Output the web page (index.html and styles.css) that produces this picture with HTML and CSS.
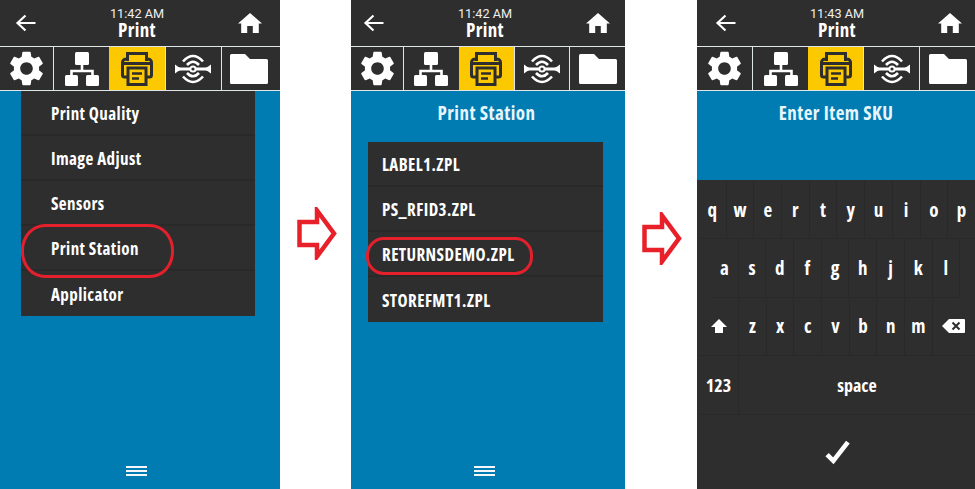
FILE: index.html
```html
<!DOCTYPE html>
<html lang="en">
<head>
  <meta charset="UTF-8" />
  <title>Print Station steps</title>
  <link rel="stylesheet" href="styles.css">
</head>
<body>

  <!-- shared icons -->
  <svg class="defs" width="0" height="0">
    <symbol id="i-back" viewBox="0 0 20 18">
      <path d="M10 1.500 2 9l8 7.500M2.500 9H20" fill="none" stroke="#fff" stroke-width="2.200"/>
    </symbol>
    <symbol id="i-home" viewBox="0 0 24 20">
      <path d="M12 0 24 10.500h-3.200V20h-6v-7H9.200v7h-6v-9.500H0z" fill="#fff"/>
    </symbol>
    <symbol id="i-gear" viewBox="2.400 2 19.200 20">
      <path fill="#fff" fill-rule="evenodd" d="M19.140 12.940c.04-.3.06-.61.06-.94 0-.32-.02-.64-.07-.94l2.030-1.580c.18-.14.23-.41.12-.61l-1.920-3.320c-.12-.22-.37-.29-.59-.22l-2.390.96c-.5-.38-1.030-.7-1.620-.94l-.36-2.540c-.04-.24-.24-.41-.48-.41h-3.840c-.24 0-.43.17-.47.41l-.36 2.540c-.59.24-1.130.57-1.620.94l-2.390-.96c-.22-.08-.47 0-.59.22L2.740 8.870c-.12.21-.08.47.12.61l2.030 1.580c-.05.3-.09.63-.09.94s.02.64.07.94l-2.030 1.580c-.18.14-.23.41-.12.61l1.920 3.320c.12.22.37.29.59.22l2.390-.96c.5.38 1.030.7 1.620.94l.36 2.540c.05.24.24.41.48.41h3.840c.24 0 .44-.17.47-.41l.36-2.540c.59-.24 1.130-.56 1.620-.94l2.390.96c.22.08.47 0 .59-.22l1.920-3.320c.12-.22.07-.47-.12-.61l-2.010-1.580zM12 15.600c-1.980 0-3.600-1.620-3.600-3.600s1.620-3.600 3.600-3.600 3.600 1.620 3.600 3.600-1.620 3.600-3.600 3.600z"/>
    </symbol>
    <symbol id="i-network" viewBox="0 0 34 34">
      <rect x="10" y="0" width="14" height="13" rx="1.500" fill="#fff"/>
      <rect x="0" y="23" width="13" height="11" rx="1.500" fill="#fff"/>
      <rect x="21" y="23" width="13" height="11" rx="1.500" fill="#fff"/>
      <path d="M17 12v7M6.500 24v-5h21v5" fill="none" stroke="#fff" stroke-width="2.600"/>
    </symbol>
    <symbol id="i-printer" viewBox="0 0 32 34">
      <path d="M6.500 9V1.500h19V9M6.500 7H5a3.500 3.500 0 0 0-3.500 3.500V23a2 2 0 0 0 2 2h3M25.500 7H27a3.500 3.500 0 0 1 3.500 3.500V23a2 2 0 0 1-2 2h-3" fill="none" stroke="#2e2e2e" stroke-width="3"/>
      <path d="M1.500 11.500h29" stroke="#2e2e2e" stroke-width="3"/>
      <rect x="7" y="16" width="18" height="16.500" fill="none" stroke="#2e2e2e" stroke-width="3"/>
      <path d="M11 21.500h10M11 26.500h7" stroke="#2e2e2e" stroke-width="2.400"/>
    </symbol>
    <symbol id="i-rfid" viewBox="0 0 36 34">
      <path d="M0 12.500c2 1.500 3 3 7 3h22c4 0 5-1.500 7-3v9c-2-1.500-3-3-7-3H7c-4 0-5 1.500-7 3z" fill="#fff"/>
      <circle cx="18" cy="17" r="3.600" fill="#fff"/>
      <circle cx="18" cy="17" r="1.600" fill="#2e2e2e"/>
      <path d="M8 9.500Q18-1.500 28 9.500M12 13Q18 6.500 24 13M8 24.500Q18 35.500 28 24.500M12 21Q18 27.500 24 21" fill="none" stroke="#fff" stroke-width="2.600"/>
    </symbol>
    <symbol id="i-folder" viewBox="0 0 38 30">
      <path d="M1.500 0H15l5 5h16.500A1.500 1.500 0 0 1 38 6.500v22a1.500 1.500 0 0 1-1.500 1.500h-35A1.500 1.500 0 0 1 0 28.500v-27A1.500 1.500 0 0 1 1.500 0z" fill="#fff"/>
    </symbol>
    <symbol id="i-arrow" viewBox="0 0 40 53">
      <path d="M2.500 15h17.500V3.500L37 26.500 20 49.500V38H2.500z" fill="#fff" stroke="#e8202a" stroke-width="4.500"/>
    </symbol>
  </svg>

  <div class="page">

    <div class="screen screen-a">
      <header class="top">
        <svg class="ic-back"><use href="#i-back"/></svg>
        <div class="clock"><span>11:42 AM</span><b>Print</b></div>
        <svg class="ic-home"><use href="#i-home"/></svg>
      </header>
      <nav class="tabs">
        <div class="tab"><svg class="ic-gear"><use href="#i-gear"/></svg></div>
        <div class="tab"><svg class="ic-network"><use href="#i-network"/></svg></div>
        <div class="tab active"><svg class="ic-printer"><use href="#i-printer"/></svg></div>
        <div class="tab"><svg class="ic-rfid"><use href="#i-rfid"/></svg></div>
        <div class="tab"><svg class="ic-folder"><use href="#i-folder"/></svg></div>
      </nav>
      <main class="body">
        <div class="menu">
          <div class="row">Print Quality</div>
          <div class="row">Image Adjust</div>
          <div class="row">Sensors</div>
          <div class="row">Print Station<i class="oval oval-a"></i></div>
          <div class="row">Applicator</div>
        </div>
        <div class="burger"><i></i><i></i><i></i></div>
      </main>
    </div>

    <div class="gap gap-a"><svg class="ic-arrow"><use href="#i-arrow"/></svg></div>

    <div class="screen screen-b">
      <header class="top">
        <svg class="ic-back"><use href="#i-back"/></svg>
        <div class="clock"><span>11:42 AM</span><b>Print</b></div>
        <svg class="ic-home"><use href="#i-home"/></svg>
      </header>
      <nav class="tabs">
        <div class="tab"><svg class="ic-gear"><use href="#i-gear"/></svg></div>
        <div class="tab"><svg class="ic-network"><use href="#i-network"/></svg></div>
        <div class="tab active"><svg class="ic-printer"><use href="#i-printer"/></svg></div>
        <div class="tab"><svg class="ic-rfid"><use href="#i-rfid"/></svg></div>
        <div class="tab"><svg class="ic-folder"><use href="#i-folder"/></svg></div>
      </nav>
      <main class="body">
        <h2>Print Station</h2>
        <div class="menu files">
          <div class="row">LABEL1.ZPL</div>
          <div class="row">PS_RFID3.ZPL</div>
          <div class="row">RETURNSDEMO.ZPL<i class="oval oval-b"></i></div>
          <div class="row">STOREFMT1.ZPL</div>
        </div>
        <div class="burger"><i></i><i></i><i></i></div>
      </main>
    </div>

    <div class="gap gap-b"><svg class="ic-arrow"><use href="#i-arrow"/></svg></div>

    <div class="screen screen-c">
      <header class="top">
        <svg class="ic-back"><use href="#i-back"/></svg>
        <div class="clock"><span>11:43 AM</span><b>Print</b></div>
        <svg class="ic-home"><use href="#i-home"/></svg>
      </header>
      <nav class="tabs">
        <div class="tab"><svg class="ic-gear"><use href="#i-gear"/></svg></div>
        <div class="tab"><svg class="ic-network"><use href="#i-network"/></svg></div>
        <div class="tab active"><svg class="ic-printer"><use href="#i-printer"/></svg></div>
        <div class="tab"><svg class="ic-rfid"><use href="#i-rfid"/></svg></div>
        <div class="tab"><svg class="ic-folder"><use href="#i-folder"/></svg></div>
      </nav>
      <main class="body">
        <h2>Enter Item SKU</h2>
        <div class="keyboard">
          <div class="keys">
            <div class="key">q</div><div class="key">w</div><div class="key">e</div><div class="key">r</div><div class="key">t</div><div class="key">y</div><div class="key">u</div><div class="key">i</div><div class="key">o</div><div class="key">p</div>
          </div>
          <div class="keys keys-home">
            <div class="key">a</div><div class="key">s</div><div class="key">d</div><div class="key">f</div><div class="key">g</div><div class="key">h</div><div class="key">j</div><div class="key">k</div><div class="key">l</div>
          </div>
          <div class="keys">
            <div class="key key-wide">
              <svg class="ic-shift" viewBox="0 0 16 14"><path d="M8 0l8 8h-4v6H4V8H0z" fill="#fff"/></svg>
            </div>
            <div class="key">z</div><div class="key">x</div><div class="key">c</div><div class="key">v</div><div class="key">b</div><div class="key">n</div><div class="key">m</div>
            <div class="key key-del">
              <svg class="ic-del" viewBox="0 0 23 14"><path d="M7 0h15a1 1 0 0 1 1 1v12a1 1 0 0 1-1 1H7L0 7z" fill="#fff"/><path d="M10.500 3.500l7 7m0-7l-7 7" stroke="#2e2e2e" stroke-width="2"/></svg>
            </div>
          </div>
          <div class="keys">
            <div class="key key-wide key-num">123</div>
            <div class="key key-space">space</div>
          </div>
          <div class="done">
            <svg class="ic-check" viewBox="0 0 24 24"><path d="M2 14l6 6L22 2" fill="none" stroke="#fff" stroke-width="4.500"/></svg>
          </div>
        </div>
      </main>
    </div>

  </div>

</body>
</html>
```

FILE: styles.css
```css
* { margin: 0; padding: 0; box-sizing: border-box; }
html, body { height: 100%; overflow: hidden; }
body {
  background: #fff;
  font-family: "Open Sans", "Noto Sans", sans-serif;
  font-stretch: 87.5%;
  color: #fff;
}
.defs { position: absolute; }
svg { display: block; }

.page {
  display: flex;
  height: 489px;
}
.screen {
  display: flex;
  flex-direction: column;
  height: 489px;
  background: #2e2e2e;
}
.screen-a { width: 280px; }
.screen-b { width: 274px; }
.screen-c { width: 278px; }

/* arrows between the screens */
.gap { display: flex; justify-content: center; }
.gap-a { width: 71px; padding: 207px 0 0 2px; }
.gap-b { width: 72px; padding: 212px 0 0 2px; }
.ic-arrow { width: 40px; height: 53px; }

/* top bar */
.top {
  display: flex;
  justify-content: space-between;
  align-items: center;
  height: 46px;
  padding: 0 18px 0 15px;
}
.screen-b .top { padding: 0 15px 0 12px; }
.screen-c .top { padding: 0 13px 0 18px; }
.clock {
  display: flex;
  flex-direction: column;
  align-items: center;
  line-height: 14px;
}
.clock span { font-family: Roboto, sans-serif; font-stretch: 100%; font-size: 12.700px; color: #eee; }
.clock b { font-size: 19px; font-weight: 700; line-height: 18px; letter-spacing: 0.4px; }
.ic-back { width: 21px; height: 18px; }
.ic-home { width: 24px; height: 20px; }

/* icon tabs */
.tabs {
  display: flex;
  height: 45px;
  border-top: 1px solid #dfe6e8;
  border-bottom: 1px solid #dfe6e8;
}
.tab {
  flex: 1;
  display: flex;
  justify-content: center;
  align-items: center;
  border-left: 1px solid #dfe6e8;
}
.tab:first-child { border-left: none; flex: 0 0 53px; }
.screen-b .tab:first-child { flex-basis: 52px; }
.screen-c .tab:first-child { flex-basis: 55px; }
.screen-a .tab:last-child { padding-right: 3px; }
.tab.active { background: #fcc900; border-left: none; }
.ic-gear { width: 35px; height: 35px; }
.ic-network { width: 34px; height: 34px; }
.ic-printer { width: 32px; height: 34px; }
.ic-rfid { width: 36px; height: 34px; }
.ic-folder { width: 38px; height: 30px; }

/* blue content */
.body {
  position: relative;
  flex: 1;
  background: #007cb2;
}
.body h2 {
  text-align: center;
  font-size: 19px;
  font-weight: 700;
  letter-spacing: 0.45px;
  line-height: 23px;
  padding-top: 11px;
  color: #e8f6fb;
}
.screen-b h2 { padding-right: 3px; }
.menu {
  width: 234px;
  margin-left: 21px;
  background: #2e2e2e;
}
.files { width: 235px; margin: 17px 0 0 17px; }
.row {
  position: relative;
  display: flex;
  align-items: center;
  height: 45px;
  padding: 2px 0 0 30px;
  font-size: 17px;
  font-weight: 700;
  letter-spacing: 0.42px;
  border-bottom: 2px solid #292929;
}
.row:last-child { border-bottom: none; }
.files .row { padding-left: 14px; }

/* red marker rings */
.oval {
  position: absolute;
  border: 3.500px solid #e3202c;
}
.oval-a { left: 0; top: -2px; width: 153px; height: 54px; border-radius: 24px / 26px; }
.oval-b { left: -2px; top: 5px; width: 167px; height: 38px; border-radius: 18px; }

.burger {
  position: absolute;
  left: 0;
  right: 7px;
  bottom: 13px;
  display: flex;
  flex-direction: column;
  align-items: center;
  gap: 2px;
}
.burger i { width: 21px; height: 2px; background: #f4f7f8; }

/* on-screen keyboard */
.keyboard {
  position: absolute;
  left: 0;
  right: 0;
  bottom: 0;
  top: 89px;
  background: #2e2e2e;
  padding: 1px 0 0 2px;
}
.keys { display: flex; height: 58.400px; }
.keys-home { padding-left: 12px; }
.key {
  flex: 0 0 27.700px;
  display: flex;
  justify-content: center;
  align-items: center;
  font-size: 19px;
  font-weight: 700;
  border-right: 1px solid #292929;
  border-bottom: 1px solid #292929;
}
.key-wide { flex-basis: 40px; }
.key-del { flex: 1; border-right: none; }
.key-space { flex: 1; border-right: none; font-size: 18px; }
.key-num { font-size: 18px; }
.ic-shift { width: 16px; height: 14px; }
.ic-del { width: 23px; height: 14px; }
.done {
  display: flex;
  justify-content: center;
  align-items: center;
  height: 75px;
}
.ic-check { width: 25px; height: 25px; }
```
